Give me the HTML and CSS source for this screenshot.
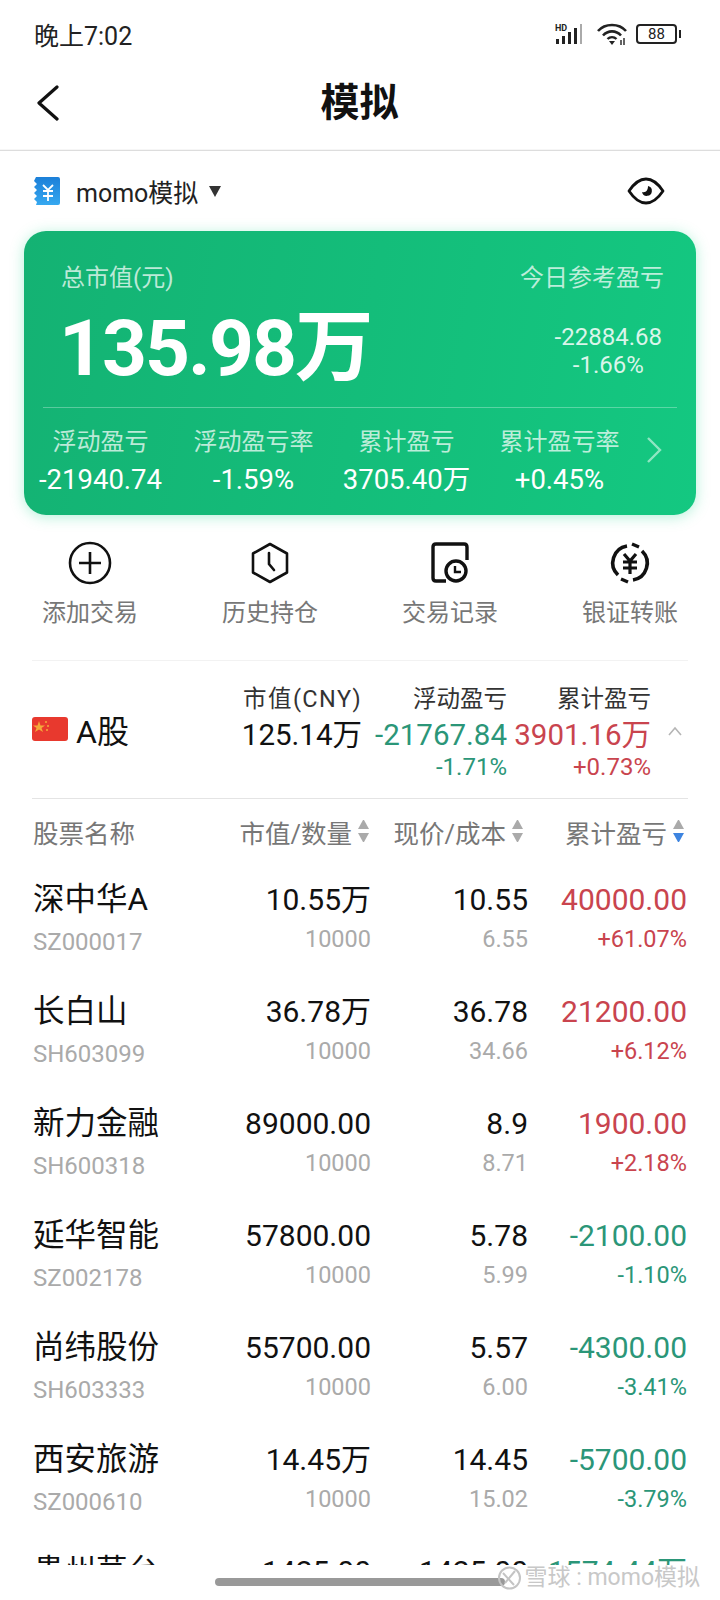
FILE: index.html
```html
<!DOCTYPE html>
<html lang="zh-CN">
<head>
  <meta charset="UTF-8">
  <meta name="viewport" content="width=device-width, initial-scale=1.0">
  <title>模拟</title>
  <link rel="stylesheet" href="styles.css">
</head>
<body>
<div class="page">

  <div class="status-bar">
    <span class="status-time">晚上7:02</span>
    <div class="status-icons">
      <svg width="33" height="22" viewBox="0 0 33 22">
        <text x="0" y="8" class="hd-text">HD</text>
        <rect x="1" y="16" width="3" height="5" fill="#222"/>
        <rect x="7" y="13" width="3" height="8" fill="#222"/>
        <rect x="13" y="9" width="3" height="12" fill="#222"/>
        <rect x="19" y="5" width="3" height="16" fill="#222"/>
        <rect x="25" y="1" width="2" height="20" fill="#aaa"/>
      </svg>
      <svg width="30" height="22" viewBox="0 0 30 22">
        <path d="M1 8 C8 0 22 0 29 8" fill="none" stroke="#222" stroke-width="2.6"/>
        <path d="M6 12.5 C11 7 19 7 24 12.5" fill="none" stroke="#222" stroke-width="2.6"/>
        <path d="M10.5 16 C13 13.5 17 13.5 19.500 16" fill="none" stroke="#222" stroke-width="2.400"/>
        <path d="M12 18 L18 18 L15 22 Z" fill="#222"/>
        <path d="M24 17 V22 M27 15 V22" stroke="#222" stroke-width="1.400"/>
      </svg>
      <div class="battery"><span>88</span></div>
    </div>
  </div>

  <div class="nav-bar">
    <svg class="back-icon" width="24" height="36" viewBox="0 0 24 36">
      <path d="M21 2 L3 18 L21 34" fill="none" stroke="#111" stroke-width="3.200" stroke-linecap="round" stroke-linejoin="round"/>
    </svg>
    <h1>模拟</h1>
  </div>

  <div class="account-row">
    <svg width="26" height="28" viewBox="0 0 26 28">
      <defs>
        <linearGradient id="acct" x1="0" y1="0" x2="0" y2="1">
          <stop offset="0" stop-color="#1c7fd8"/>
          <stop offset="1" stop-color="#36a8f0"/>
        </linearGradient>
      </defs>
      <path d="M2 0 H24 Q26 0 26 2 V26 Q26 28 24 28 H2 L3 25 L0 22 L3 19 L0 16 L3 13 L0 10 L3 7 L0 4 Z" fill="url(#acct)"/>
      <path d="M9 8 L14 13 L19 8 M9 14 H19 M9 19 H19 M14 13 V24" fill="none" stroke="#fff" stroke-width="1.800"/>
    </svg>
    <span class="account-name">momo模拟</span>
    <span class="account-caret"></span>
    <svg class="eye-icon" width="38" height="28" viewBox="0 0 38 28">
      <path d="M2 14 C8 5 13 2 19 2 C25 2 30 5 36 14 C30 23 25 26 19 26 C13 26 8 23 2 14 Z" fill="none" stroke="#111" stroke-width="2.800" stroke-linejoin="round"/>
      <path d="M21 9 A5 5 0 1 1 15 15 C19 16 21 13 21 9 Z" fill="#111"/>
    </svg>
  </div>

  <div class="card">
    <div class="card-top">
      <div class="total">
        <div class="card-label">总市值(元)</div>
        <div class="total-value">135.98万</div>
      </div>
      <div class="today">
        <div class="card-label">今日参考盈亏</div>
        <div class="today-values">
          <div>-22884.68</div>
          <div>-1.66%</div>
        </div>
      </div>
    </div>
    <div class="card-line"></div>
    <div class="card-bottom">
      <div class="metrics">
        <div class="metric"><div class="card-label">浮动盈亏</div><div class="metric-value">-21940.74</div></div>
        <div class="metric"><div class="card-label">浮动盈亏率</div><div class="metric-value">-1.59%</div></div>
        <div class="metric"><div class="card-label">累计盈亏</div><div class="metric-value">3705.40万</div></div>
        <div class="metric"><div class="card-label">累计盈亏率</div><div class="metric-value">+0.45%</div></div>
      </div>
      <svg class="card-arrow" width="16" height="26" viewBox="0 0 16 26">
        <path d="M2 1 L14 13 L2 25" fill="none" stroke="#8fe6c2" stroke-width="2.400"/>
      </svg>
    </div>
  </div>

  <div class="actions">
    <div class="action">
      <svg width="44" height="44" viewBox="0 0 44 44">
        <circle cx="22" cy="22" r="20" fill="none" stroke="#111" stroke-width="2.600"/>
        <path d="M11 22 H33 M22 11 V33" stroke="#111" stroke-width="2.600"/>
      </svg>
      <span>添加交易</span>
    </div>
    <div class="action">
      <svg width="44" height="44" viewBox="0 0 44 44">
        <path d="M22 3 L39 12.500 V31.500 L22 41 L5 31.500 V12.500 Z" fill="none" stroke="#111" stroke-width="2.600" stroke-linejoin="round"/>
        <path d="M21 12 V23 L26 29" fill="none" stroke="#111" stroke-width="2.600" stroke-linecap="round"/>
      </svg>
      <span>历史持仓</span>
    </div>
    <div class="action">
      <svg width="44" height="44" viewBox="0 0 44 44">
        <path d="M18 40 H8 Q5 40 5 37 V6 Q5 3 8 3 H36 Q39 3 39 6 V19" fill="none" stroke="#111" stroke-width="3.400"/>
        <circle cx="28" cy="30" r="10" fill="none" stroke="#111" stroke-width="3.400"/>
        <path d="M27 25 V31 H33" fill="none" stroke="#111" stroke-width="2.400"/>
      </svg>
      <span>交易记录</span>
    </div>
    <div class="action">
      <svg width="44" height="44" viewBox="0 0 44 44">
        <path d="M10 34 A17 17 0 0 1 19 5" fill="none" stroke="#111" stroke-width="3.600"/>
        <path d="M34 10 A17 17 0 0 1 25 39" fill="none" stroke="#111" stroke-width="3.600"/>
        <path d="M24 3 L31 6 M20 41 L13 38" stroke="#111" stroke-width="3.400"/>
        <path d="M16 13 L22 20 L28 13 M15 21 H29 M15 27 H29 M22 20 V33" fill="none" stroke="#111" stroke-width="3.200"/>
      </svg>
      <span>银证转账</span>
    </div>
  </div>

  <div class="market">
    <div class="market-name">
      <svg width="36" height="24" viewBox="0 0 36 24">
        <rect width="36" height="24" rx="3" fill="#e8392e"/>
        <path d="M7 4 L8.500 8.500 L13 8.500 L9.500 11 L11 15 L7 12.500 L3 15 L4.500 11 L1 8.500 L5.500 8.500 Z" fill="#f4a93a"/>
        <circle cx="14" cy="5" r="1" fill="#f4a93a"/>
        <circle cx="16" cy="9" r="1" fill="#f4a93a"/>
        <circle cx="15" cy="13" r="1" fill="#f4a93a"/>
      </svg>
      <span>A股</span>
    </div>
    <div class="market-col">
      <div class="market-label market-label-wide">市值(CNY)</div>
      <div class="market-value">125.14万</div>
    </div>
    <div class="market-col">
      <div class="market-label">浮动盈亏</div>
      <div class="market-value down">-21767.84</div>
      <div class="market-pct down">-1.71%</div>
    </div>
    <div class="market-col">
      <div class="market-label">累计盈亏</div>
      <div class="market-value up">3901.16万</div>
      <div class="market-pct up">+0.73%</div>
    </div>
    <svg class="market-fold" width="14" height="10" viewBox="0 0 14 10">
      <path d="M1 9 L7 2 L13 9" fill="none" stroke="#b5b5b5" stroke-width="1.600"/>
    </svg>
  </div>

  <div class="table-head">
    <div>股票名称</div>
    <div class="sort-cell">市值/数量<span class="sort"></span></div>
    <div class="sort-cell">现价/成本<span class="sort"></span></div>
    <div class="sort-cell">累计盈亏<span class="sort sort-desc"></span></div>
  </div>

  <div class="stock-list">
    <div class="stock">
      <div class="stock-name"><div class="name">深中华A</div><div class="code">SZ000017</div></div>
      <div class="cell"><div class="val">10.55万</div><div class="sub">10000</div></div>
      <div class="cell"><div class="val">10.55</div><div class="sub">6.55</div></div>
      <div class="cell up"><div class="val">40000.00</div><div class="sub">+61.07%</div></div>
    </div>
    <div class="stock">
      <div class="stock-name"><div class="name">长白山</div><div class="code">SH603099</div></div>
      <div class="cell"><div class="val">36.78万</div><div class="sub">10000</div></div>
      <div class="cell"><div class="val">36.78</div><div class="sub">34.66</div></div>
      <div class="cell up"><div class="val">21200.00</div><div class="sub">+6.12%</div></div>
    </div>
    <div class="stock">
      <div class="stock-name"><div class="name">新力金融</div><div class="code">SH600318</div></div>
      <div class="cell"><div class="val">89000.00</div><div class="sub">10000</div></div>
      <div class="cell"><div class="val">8.9</div><div class="sub">8.71</div></div>
      <div class="cell up"><div class="val">1900.00</div><div class="sub">+2.18%</div></div>
    </div>
    <div class="stock">
      <div class="stock-name"><div class="name">延华智能</div><div class="code">SZ002178</div></div>
      <div class="cell"><div class="val">57800.00</div><div class="sub">10000</div></div>
      <div class="cell"><div class="val">5.78</div><div class="sub">5.99</div></div>
      <div class="cell down"><div class="val">-2100.00</div><div class="sub">-1.10%</div></div>
    </div>
    <div class="stock">
      <div class="stock-name"><div class="name">尚纬股份</div><div class="code">SH603333</div></div>
      <div class="cell"><div class="val">55700.00</div><div class="sub">10000</div></div>
      <div class="cell"><div class="val">5.57</div><div class="sub">6.00</div></div>
      <div class="cell down"><div class="val">-4300.00</div><div class="sub">-3.41%</div></div>
    </div>
    <div class="stock">
      <div class="stock-name"><div class="name">西安旅游</div><div class="code">SZ000610</div></div>
      <div class="cell"><div class="val">14.45万</div><div class="sub">10000</div></div>
      <div class="cell"><div class="val">14.45</div><div class="sub">15.02</div></div>
      <div class="cell down"><div class="val">-5700.00</div><div class="sub">-3.79%</div></div>
    </div>
    <div class="stock">
      <div class="stock-name"><div class="name">贵州茅台</div></div>
      <div class="cell"><div class="val">1425.00</div></div>
      <div class="cell"><div class="val">1425.00</div></div>
      <div class="cell down"><div class="val">1574.44万</div></div>
    </div>
  </div>

  <div class="home-bar"></div>

  <div class="watermark">
    <svg width="25" height="24" viewBox="0 0 25 24">
      <circle cx="12.500" cy="12" r="10.500" fill="none" stroke="#c4c4c4" stroke-width="2"/>
      <path d="M6 7 L17 19 M18 5 L8 17" stroke="#c4c4c4" stroke-width="2"/>
    </svg>
    <span>雪球 : momo模拟</span>
  </div>

</div>
</body>
</html>
```

FILE: styles.css
```css
* {
  box-sizing: border-box;
}

body {
  margin: 0;
  background: #fff;
  color: #111;
  font-family: Roboto, "Noto Sans CJK SC", sans-serif;
}

.page {
  position: relative;
  width: 720px;
  height: 1600px;
  overflow: hidden;
}

.up {
  color: #c9444e;
}

.down {
  color: #2b9678;
}

/* status bar */
.status-bar {
  height: 68px;
  padding: 0 39px 0 34px;
  display: flex;
  align-items: center;
  justify-content: space-between;
}

.status-time {
  font-size: 25px;
  color: #222;
}

.status-icons {
  display: flex;
  align-items: center;
  gap: 9px;
}

.hd-text {
  font-size: 9px;
  font-weight: 700;
  fill: #222;
}

.battery {
  position: relative;
  width: 41px;
  height: 20px;
  border: 2px solid #222;
  border-radius: 4px;
  margin-right: 4px;
  font-size: 15px;
  line-height: 16px;
  text-align: center;
  color: #222;
}

.battery::after {
  content: "";
  position: absolute;
  right: -6px;
  top: 4px;
  width: 2px;
  height: 8px;
  background: #222;
}

/* nav */
.nav-bar {
  height: 83px;
  padding: 0 36px 13px;
  border-bottom: 1px solid #ddd;
  display: flex;
  align-items: center;
  box-shadow: 0 -1px 0 #f6f6f6 inset;
}

.back-icon {
  flex: none;
}

.nav-bar h1 {
  margin: 0;
  flex: 1;
  padding-right: 25px;
  text-align: center;
  font-size: 39px;
  font-weight: 700;
  line-height: 50px;
}

/* account row */
.account-row {
  height: 80px;
  padding: 0 55px 0 34px;
  display: flex;
  align-items: center;
}

.account-name {
  margin-left: 16px;
  font-size: 25px;
  color: #222;
}

.account-caret {
  margin-left: 11px;
  border-left: 6.500px solid transparent;
  border-right: 6.500px solid transparent;
  border-top: 11px solid #333;
}

.eye-icon {
  margin-left: auto;
}

/* green card */
.card {
  margin: 0 24px;
  height: 284px;
  border-radius: 22px;
  background: linear-gradient(100deg, #14b273, #14c881);
  box-shadow: 0 2px 14px rgba(40, 215, 145, 0.35);
  color: #fff;
}

.card-top {
  height: 176px;
  padding: 32px 32px 0 37px;
  display: flex;
  justify-content: space-between;
}

.card-label {
  font-size: 24px;
  line-height: 30px;
  color: rgba(255, 255, 255, 0.72);
}

.total-value {
  margin-top: 15px;
  margin-left: -2px;
  font-size: 78.500px;
  line-height: 80px;
  font-weight: 700;
  letter-spacing: -2px;
}

.today {
  display: flex;
  flex-direction: column;
  align-items: flex-end;
}

.today-values {
  margin-top: 30px;
  margin-right: 2px;
  text-align: center;
  font-size: 24px;
  line-height: 28px;
  color: rgba(255, 255, 255, 0.85);
}

.card-line {
  height: 1px;
  margin: 0 19px;
  background: rgba(255, 255, 255, 0.3);
}

.card-bottom {
  display: flex;
  align-items: flex-start;
}

.metrics {
  width: 612px;
  display: grid;
  grid-template-columns: repeat(4, 153px);
  text-align: center;
}

.metric {
  padding-top: 19px;
}

.metric-value {
  margin-top: 5px;
  font-size: 27.500px;
  line-height: 36px;
}

.card-arrow {
  margin: 29px 0 0 10px;
}

/* shortcuts */
.actions {
  margin-top: 26px;
  display: grid;
  grid-template-columns: repeat(4, 180px);
}

.action {
  display: flex;
  flex-direction: column;
  align-items: center;
}

.action span {
  margin-top: 13px;
  font-size: 24px;
  line-height: 30px;
  color: #777;
}

/* market summary */
.market {
  margin: 32px 0 0 32px;
  padding-top: 20px;
  width: 656px;
  height: 139px;
  border-top: 1px solid #f2f2f2;
  border-bottom: 1px solid #e4e4e4;
  display: grid;
  grid-template-columns: 185px 145px 145px 144px 1fr;
}

.market-name {
  display: flex;
  align-items: center;
  gap: 8px;
  font-size: 32px;
  align-self: center;
  margin-top: -21px;
}

.market-col {
  text-align: right;
}

.market-label {
  font-size: 23.500px;
  line-height: 36px;
  color: #333;
}

.market-label-wide {
  letter-spacing: 1.400px;
}

.market-value {
  font-size: 29.500px;
  line-height: 37px;
}

.market-pct {
  font-size: 24px;
  line-height: 26px;
}

.market-fold {
  justify-self: end;
  margin: 45px 6px 0 0;
}

/* table */
.table-head {
  height: 68px;
  padding: 0 36px 4px 33px;
  display: grid;
  grid-template-columns: 201px 135px 154px 161px;
  align-items: center;
  font-size: 25.500px;
  color: #777;
}

.sort-cell {
  display: flex;
  justify-content: flex-end;
  align-items: center;
  gap: 6px;
}

.sort {
  width: 11px;
  height: 22px;
  display: flex;
  flex-direction: column;
  justify-content: space-between;
}

.sort::before,
.sort::after {
  content: "";
  border-left: 5.500px solid transparent;
  border-right: 5.500px solid transparent;
}

.sort::before {
  border-bottom: 9px solid #aaa;
}

.sort::after {
  border-top: 9px solid #aaa;
}

.sort-desc::after {
  border-top-color: #3d84e0;
}

.stock-list {
  margin-top: 14px;
  height: 684px;
  overflow: hidden;
}

.stock {
  height: 112px;
  padding: 0 33px;
  display: grid;
  grid-template-columns: 201px 137px 157px 159px;
  align-items: start;
}

.name {
  font-size: 31.500px;
  line-height: 38px;
}

.code {
  font-size: 24px;
  line-height: 46px;
  color: #aaa;
}

.cell {
  text-align: right;
}

.val {
  font-size: 30px;
  line-height: 38px;
}

.sub {
  font-size: 23.500px;
  line-height: 40px;
  color: #aaa;
}

.cell.up .sub,
.cell.down .sub {
  color: inherit;
}

/* bottom */
.home-bar {
  width: 290px;
  height: 8px;
  margin: 13px 0 0 215px;
  border-radius: 4px;
  background: #999;
}

.watermark {
  position: absolute;
  right: 20px;
  bottom: 8px;
  display: flex;
  align-items: center;
  gap: 2px;
  font-size: 23px;
  line-height: 28px;
  color: #c8c8c8;
}
```
